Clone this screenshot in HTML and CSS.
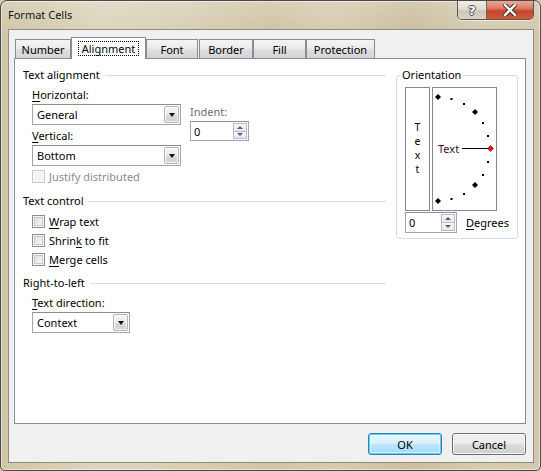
FILE: index.html
```html
<!DOCTYPE html>
<html lang="en">
<head>
<meta charset="utf-8">
<title>Format Cells</title>
<link rel="stylesheet" href="styles.css">
</head>
<body>
<div class="window">
  <div class="titlebar">
    <span class="title">Format Cells</span>
    <div class="caption-buttons">
      <div class="cap-btn help">?</div>
      <div class="cap-btn close">
        <svg width="14" height="12" viewBox="0 0 14 12">
          <path d="M2 1 L12 11 M12 1 L2 11" stroke="#3b2b28" stroke-width="4.4" stroke-linecap="square"/>
          <path d="M2 1 L12 11 M12 1 L2 11" stroke="#ffffff" stroke-width="2.4" stroke-linecap="square"/>
        </svg>
      </div>
    </div>
  </div>

  <div class="client">
    <div class="tabs">
      <div class="tab tab-number">Number</div>
      <div class="tab tab-alignment active"><span class="focus">Alignment</span></div>
      <div class="tab tab-font">Font</div>
      <div class="tab tab-border">Border</div>
      <div class="tab tab-fill">Fill</div>
      <div class="tab tab-protection">Protection</div>
    </div>

    <div class="panel">
      <div class="col-main">
        <div class="group-head"><span>Text alignment</span><i class="rule"></i></div>
        <div class="align-body">
          <div class="align-col">
            <div class="lbl lbl-horizontal"><u>H</u>orizontal:</div>
            <div class="combo combo-wide combo-general"><span>General</span><span class="drop"><i></i></span></div>
            <div class="lbl lbl-vertical"><u>V</u>ertical:</div>
            <div class="combo combo-wide combo-bottom"><span>Bottom</span><span class="drop"><i></i></span></div>
            <div class="check disabled check-justify"><span class="box"></span><span>Justify distributed</span></div>
          </div>
          <div class="indent-col">
            <div class="lbl dim lbl-indent">Indent:</div>
            <div class="spin spin-indent"><span class="spin-val">0</span><span class="spin-btns"><span class="sb up"><i></i></span><span class="sb down"><i></i></span></span></div>
          </div>
        </div>

        <div class="group-head gh-control"><span>Text control</span><i class="rule"></i></div>
        <div class="section">
          <div class="check check-wrap"><span class="box"></span><span><u>W</u>rap text</span></div>
          <div class="check check-next"><span class="box"></span><span>Shrin<u>k</u> to fit</span></div>
          <div class="check check-next"><span class="box"></span><span><u>M</u>erge cells</span></div>
        </div>

        <div class="group-head gh-rtl"><span>Right-to-left</span><i class="rule"></i></div>
        <div class="section">
          <div class="lbl lbl-direction"><u>T</u>ext direction:</div>
          <div class="combo combo-context"><span>Context</span><span class="drop"><i></i></span></div>
        </div>
      </div>

      <fieldset class="orientation">
        <legend>Orientation</legend>
        <div class="orient-boxes">
          <div class="vbox">
            <span>T</span><span>e</span><span>x</span><span>t</span>
          </div>
          <div class="arcbox">
            <svg width="63" height="122" viewBox="0 0 63 122">
              <text x="5" y="65" class="arc-text">Text</text>
              <line x1="29" y1="60.5" x2="56" y2="60.5" stroke="#000" stroke-width="1"/>
              <!-- large markers every 45 degrees -->
              <polygon points="5,6 8,9 5,12 2,9" fill="#000"/>
              <polygon points="42,21 45,24 42,27 39,24" fill="#000"/>
              <polygon points="42,94 45,97 42,100 39,97" fill="#000"/>
              <polygon points="5,110 8,113 5,116 2,113" fill="#000"/>
              <polygon points="57.5,57.5 60.5,60.5 57.5,63.5 54.5,60.5" fill="#e81010" stroke="#8a0000" stroke-width="0.6"/>
              <!-- small ticks every 15 degrees -->
              <rect x="17.5" y="10" width="2" height="2" fill="#000"/>
              <rect x="30" y="15" width="2" height="2" fill="#000"/>
              <rect x="49" y="34" width="2" height="2" fill="#000"/>
              <rect x="54" y="47" width="2" height="2" fill="#000"/>
              <rect x="54" y="73" width="2" height="2" fill="#000"/>
              <rect x="49" y="86" width="2" height="2" fill="#000"/>
              <rect x="30" y="105" width="2" height="2" fill="#000"/>
              <rect x="17.5" y="110" width="2" height="2" fill="#000"/>
            </svg>
          </div>
        </div>
        <div class="degrees-row">
          <div class="spin spin-degrees"><span class="spin-val">0</span><span class="spin-btns"><span class="sb up"><i></i></span><span class="sb down"><i></i></span></span></div>
          <span class="degrees-label"><u>D</u>egrees</span>
        </div>
      </fieldset>
    </div>

    <div class="buttons">
      <div class="btn btn-default">OK</div>
      <div class="btn">Cancel</div>
    </div>
  </div>
</div>
</body>
</html>
```

FILE: styles.css
```css
* { box-sizing: border-box; }

html, body {
  margin: 0;
  padding: 0;
}

body {
  width: 541px;
  height: 471px;
  overflow: hidden;
  background: #d4cbb0;
  font-family: "Noto Sans", "Open Sans", sans-serif;
  font-size: 11px;
  color: #000;
}

u { text-decoration: underline; text-underline-offset: 2px; }

/* ---------- window frame ---------- */
.window {
  width: 541px;
  height: 471px;
  border: 1px solid #4a4a48;
  border-radius: 7px 7px 5px 5px;
  background:
    linear-gradient(180deg, rgba(255,255,255,0.18), rgba(255,255,255,0) 30px),
    linear-gradient(90deg, #d0c6a8 0%, #dcd4bd 18%, #d9d0b6 32%, #cfc5a7 50%, #d6ccb1 62%, #cbbf9f 76%, #d5ccb2 90%, #d2c9ad 100%);
  box-shadow: inset 0 0 0 1px rgba(255,255,255,0.5);
  display: flex;
  flex-direction: column;
}

.titlebar {
  height: 28px;
  display: flex;
  align-items: flex-start;
}

.title {
  padding: 6px 0 0 7px;
  font-size: 11px;
  line-height: 16px;
  color: #151515;
}

.caption-buttons {
  margin-left: auto;
  margin-right: 6px;
  display: flex;
  height: 19px;
  border: 1px solid #595650;
  border-top: none;
  border-radius: 0 0 5px 5px;
  overflow: hidden;
  box-shadow: 0 1px 0 rgba(255,255,255,0.6);
}

.cap-btn {
  height: 18px;
  display: flex;
  align-items: center;
  justify-content: center;
}

.help {
  width: 29px;
  border-right: 1px solid #6b665c;
  background: linear-gradient(180deg, #f1eee7 0%, #e2ddd1 45%, #cdc7b8 55%, #d9d4c7 100%);
  color: #fff;
  font-family: "DejaVu Sans", sans-serif;
  font-weight: bold;
  font-size: 13px;
  text-shadow: 1px 0 0 #4a4a4a, -1px 0 0 #4a4a4a, 0 1px 0 #4a4a4a, 0 -1px 0 #4a4a4a;
}

.close {
  width: 46px;
  background: linear-gradient(180deg, #e9a898 0%, #dc7c66 40%, #c6452a 55%, #cf5a3c 100%);
}

/* ---------- client area ---------- */
.client {
  margin: 0 6px 0 7px;
  height: 434px;
  border: 1px solid #8f8b80;
  background: #f0f0f0;
  padding: 7px 0 0 5px;
  display: flex;
  flex-direction: column;
}

.tabs {
  height: 21px;
  padding-left: 1px;
  display: flex;
  align-items: flex-end;
}

.tab {
  height: 19px;
  padding-top: 1px;
  border: 1px solid #898c95;
  border-bottom: none;
  background: linear-gradient(180deg, #f4f4f4 0%, #ebebeb 45%, #dedede 55%, #d5d5d5 100%);
  display: flex;
  align-items: center;
  justify-content: center;
  color: #000;
}

.tab-number { width: 56px; }
.tab-alignment { width: 75px; }
.tab-font { width: 52px; margin-right: 1px; }
.tab-border { width: 54px; }
.tab-fill { width: 53px; }
.tab-protection { width: 69px; }

.tab.active {
  position: relative;
  z-index: 1;
  height: 22px;
  margin-bottom: -1px;
  padding-top: 0;
  background: #fff;
}

.focus {
  outline: 1px dotted #000;
  outline-offset: 0;
  padding: 0 3px;
  line-height: 13px;
}

/* ---------- tab page ---------- */
.panel {
  margin-left: 0;
  width: 512px;
  height: 366px;
  border: 1px solid #898c95;
  background: #fff;
  padding: 8px 0 0 8px;
  display: flex;
  align-items: flex-start;
}

.col-main {
  width: 363px;
  display: flex;
  flex-direction: column;
}

.group-head {
  height: 16px;
  line-height: 16px;
  display: flex;
  align-items: center;
}

.group-head .rule {
  flex: 1;
  height: 1px;
  margin-left: 5px;
  background: #d5dfe5;
}

.gh-control { margin-top: 9px; }
.gh-rtl { margin-top: 8px; }

.lbl {
  height: 16px;
  line-height: 16px;
}

.dim { color: #6d6d6d; }

.align-body {
  display: flex;
  margin-left: 9px;
}

.align-col {
  display: flex;
  flex-direction: column;
  width: 149px;
}

.lbl-horizontal { margin-top: 4px; }
.combo-general { margin-top: 1px; }
.lbl-vertical { margin-top: 3px; }
.combo-bottom { margin-top: 1px; }
.check-justify { margin-top: 2px; }

.indent-col {
  margin-left: 9px;
  display: flex;
  flex-direction: column;
}

.lbl-indent { margin-top: 21px; }
.spin-indent { margin-top: 1px; width: 59px; height: 20px; }

.section {
  margin-left: 9px;
  display: flex;
  flex-direction: column;
}

.check-wrap { margin-top: 4px; }
.check-next { margin-top: 3px; }

.lbl-direction { margin-top: 4px; }
.combo-context { margin-top: 1px; width: 98px; }

/* ---------- combo boxes ---------- */
.combo {
  height: 21px;
  border: 1px solid #a5a5a5;
  border-top-color: #8d8d8d;
  background: #fff;
  display: flex;
  align-items: center;
  padding-left: 4px;
}

.combo-wide { width: 149px; }

.combo .drop {
  margin-left: auto;
  margin-right: 1px;
  width: 15px;
  height: 17px;
  border: 1px solid #b4b4b4;
  border-radius: 2px;
  background: linear-gradient(180deg, #f6f6f6 0%, #e9e9e9 50%, #dadada 51%, #d2d2d2 100%);
  box-shadow: inset 0 0 0 1px rgba(255,255,255,0.7);
  display: flex;
  align-items: center;
  justify-content: center;
}

.combo .drop i {
  width: 0;
  height: 0;
  border-left: 3.5px solid transparent;
  border-right: 3.5px solid transparent;
  border-top: 4px solid #111;
  margin-top: 1px;
}

/* ---------- spin boxes ---------- */
.spin {
  border: 1px solid #a5a5a5;
  border-top-color: #8d8d8d;
  background: #fff;
  display: flex;
  align-items: center;
  padding-left: 3px;
}

.spin-val { flex: 1; }

.spin-btns {
  width: 15px;
  height: 100%;
  padding: 1px 1px 1px 0;
  display: flex;
  flex-direction: column;
  gap: 0;
}

.sb {
  flex: 1;
  border: 1px solid #b7bcc6;
  background: linear-gradient(180deg, #f8f8f9 0%, #e6e8ec 100%);
  display: flex;
  align-items: center;
  justify-content: center;
}

.sb.down { border-top: none; }

.sb.up i {
  width: 0; height: 0;
  border-left: 3px solid transparent;
  border-right: 3px solid transparent;
  border-bottom: 3px solid #4c5f85;
}

.sb.down i {
  width: 0; height: 0;
  border-left: 3px solid transparent;
  border-right: 3px solid transparent;
  border-top: 3px solid #4c5f85;
}

/* ---------- check boxes ---------- */
.check {
  height: 16px;
  display: flex;
  align-items: center;
}

.check .box {
  width: 13px;
  height: 13px;
  margin-right: 4px;
  border: 1px solid #8e8f8f;
  background: linear-gradient(135deg, #d9d9d9 0%, #ededed 55%, #fbfbfb 100%);
  box-shadow: inset 0 0 0 1px #f4f4f4, inset 0 0 0 2px #c9c9c9;
}

.check.disabled { color: #8d8d8d; }

.check.disabled .box {
  border-color: #cacaca;
  background: #f4f4f4;
  box-shadow: inset 0 0 0 1px #fafafa;
}

/* ---------- orientation ---------- */
.orientation {
  margin: 0 0 0 10px;
  width: 122px;
  height: 172px;
  min-width: 0;
  border: 1px solid #d5dfe5;
  border-radius: 3px;
  padding: 4px 8px 4px 8px;
}

.orientation legend {
  padding: 0 2px;
  margin-left: -5px;
  line-height: 16px;
}

.orient-boxes {
  display: flex;
  gap: 2px;
}

.vbox {
  width: 25px;
  height: 124px;
  border: 1px solid #828790;
  display: flex;
  flex-direction: column;
  align-items: center;
  justify-content: center;
  padding-bottom: 3px;
}

.vbox span {
  display: block;
  height: 14px;
  font-size: 10.5px;
  line-height: 14px;
}

.arcbox {
  width: 65px;
  height: 124px;
  border: 1px solid #828790;
}

.arcbox svg { display: block; }

.arc-text {
  font-family: "Noto Sans", "Open Sans", sans-serif;
  font-size: 11px;
  fill: #3d0d25;
}

.degrees-row {
  margin-top: 1px;
  display: flex;
  align-items: center;
}

.spin-degrees { width: 54px; height: 21px; }

.degrees-label { margin-left: 9px; }

/* ---------- dialog buttons ---------- */
.buttons {
  width: 512px;
  margin-top: 9px;
  display: flex;
  justify-content: flex-end;
  gap: 10px;
}

.btn {
  width: 74px;
  height: 22px;
  border: 1px solid #707070;
  border-radius: 3px;
  background: linear-gradient(180deg, #f2f2f2 0%, #ebebeb 48%, #dddddd 52%, #cfcfcf 100%);
  box-shadow: inset 0 0 0 1px rgba(255,255,255,0.75);
  display: flex;
  align-items: center;
  justify-content: center;
}

.btn-default {
  border-color: #3c7fb1;
  box-shadow: inset 0 0 0 1px #48d4fd, inset 0 0 0 2px rgba(255,255,255,0.5);
  background: linear-gradient(180deg, #eaf6fd 0%, #d9f0fc 48%, #bee6fd 52%, #a7d9f5 100%);
}
```
